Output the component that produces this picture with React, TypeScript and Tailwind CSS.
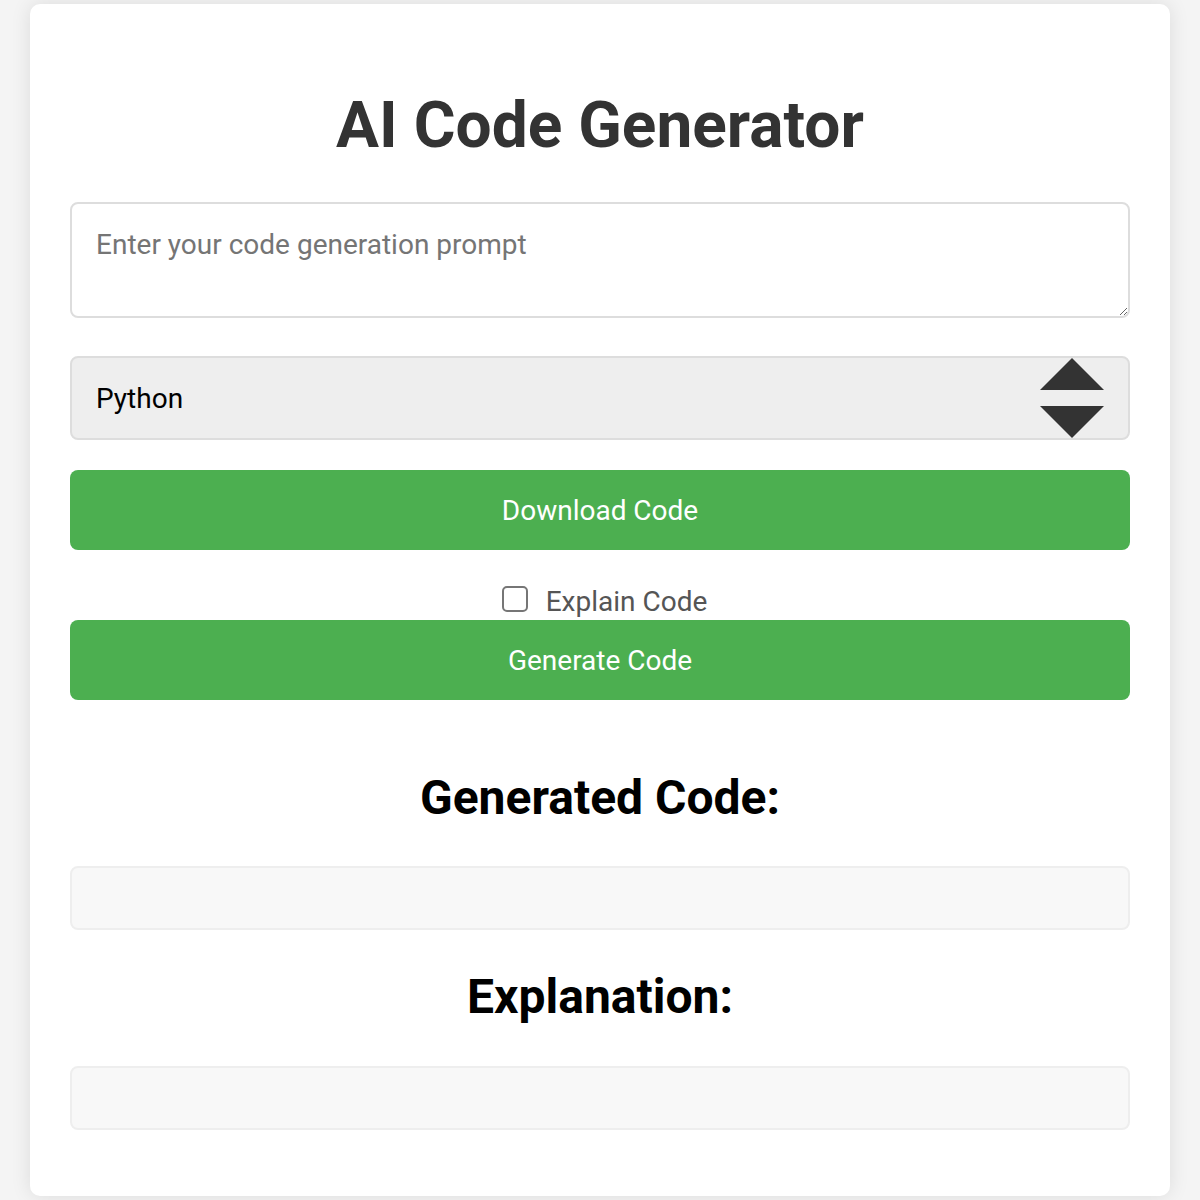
import { useState } from "react";

const FONT = { fontFamily: "Roboto, 'Liberation Sans', sans-serif" };

function SelectArrows() {
    return (
        <svg width="64" height="80" viewBox="0 0 64 80" className="shrink-0">
            <polygon points="32,0 64,32 0,32" fill="#333" />
            <polygon points="0,48 64,48 32,80" fill="#333" />
        </svg>
    );
}

export default function App() {
    const [prompt, setPrompt] = useState("");
    const [explain, setExplain] = useState(false);

    return (
        <div className="min-h-[1200px] bg-[#f4f4f4] pt-[4px]" style={FONT}>
            <div className="mx-[30px] flex h-[1192px] flex-col rounded-[10px] bg-white px-[40px] pt-[40px] shadow-[0_0_20px_rgba(0,0,0,0.1)]">
                {/* Title */}
                <h1 className="mt-[44px] text-center text-[64px] font-bold leading-[75px] text-[#333]">
                    AI Code Generator
                </h1>

                <textarea
                    value={prompt}
                    onChange={(e) => setPrompt(e.target.value)}
                    placeholder="Enter your code generation prompt"
                    className="mt-[39px] h-[116px] w-full rounded-[8px] border-2 border-[#ddd] px-[24px] pt-[24px] pb-[20px] text-[28px] leading-[34px] text-[#333] outline-none placeholder:text-[#757575]"
                />

                {/* Language select */}
                <div className="mt-[38px] flex h-[84px] items-center justify-between rounded-[8px] border-2 border-[#ddd] bg-[#eee] pl-[24px] pr-[24px]">
                    <span className="mt-[2px] text-[28px] text-black">Python</span>
                    <SelectArrows />
                </div>

                <button className="mt-[30px] h-[80px] w-full rounded-[8px] bg-[#4caf50] pt-[2px] text-[28px] text-white">
                    Download Code
                </button>

                <label className="mt-[30px] flex h-[40px] items-center justify-center gap-[18px] pl-[9px] text-[28px] text-[#555]">
                    <span
                        onClick={() => setExplain(!explain)}
                        className="mt-[-2px] h-[26px] w-[26px] rounded-[5px] border-2 border-[#767676] bg-white"
                    />
                    <span className="mt-[4px]">Explain Code</span>
                </label>

                <button className="h-[80px] w-full rounded-[8px] bg-[#4caf50] pt-[2px] text-[28px] text-white">
                    Generate Code
                </button>

                <h2 className="mt-[70px] text-center text-[48px] font-bold leading-[56px] text-black">
                    Generated Code:
                </h2>
                <div className="mt-[40px] h-[64px] w-full rounded-[8px] border-2 border-[#eee] bg-[#f8f8f8]" />

                <h2 className="mt-[39px] text-center text-[48px] font-bold leading-[56px] text-black">
                    Explanation:
                </h2>
                <div className="mt-[41px] h-[64px] w-full rounded-[8px] border-2 border-[#eee] bg-[#f8f8f8]" />
            </div>
        </div>
    );
}
